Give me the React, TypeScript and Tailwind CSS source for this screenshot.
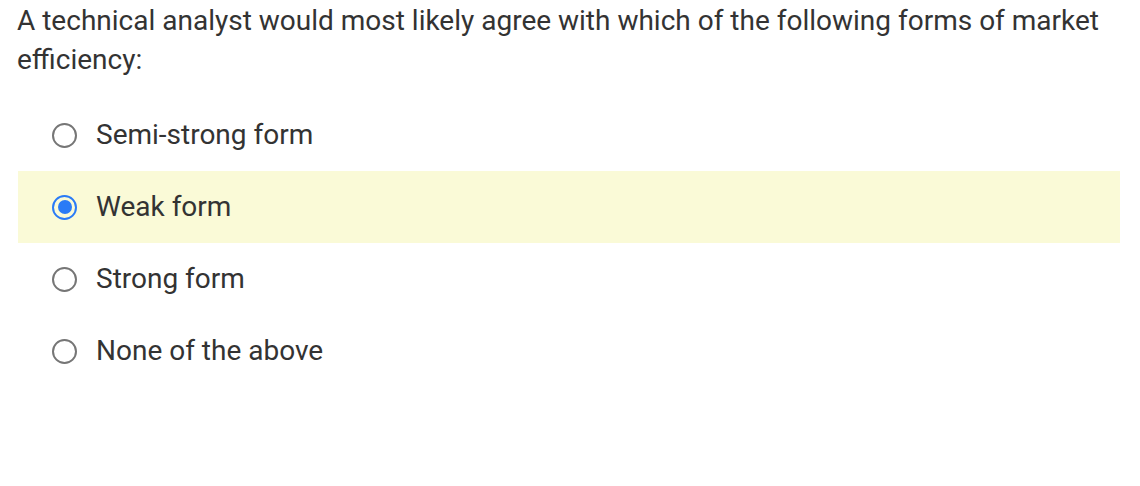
const OPTIONS = ["Semi-strong form", "Weak form", "Strong form", "None of the above"];

export default function App() {
  const selected = 1;
  return (
    <div className="w-[1140px] h-[486px] bg-white font-['Roboto',sans-serif] text-[#333333]">
      <p className="pl-[17px] pr-4 pt-[1px] text-[28px] leading-[39px]">
        A technical analyst would most likely agree with which of the following forms of market efficiency:
      </p>
      <div className="mt-[20px] pl-[18px] pr-[20px] flex flex-col">
        {OPTIONS.map((o, i) => {
          const on = i === selected;
          return (
            <label
              key={o}
              className={`flex items-center h-[72px] pl-[34px] ${on ? "bg-[#fafad7]" : ""}`}
            >
              {on ? (
                <span className="w-[25px] h-[25px] rounded-full border-[2.5px] border-[#2a7bf6] flex items-center justify-center">
                  <span className="w-[14px] h-[14px] rounded-full bg-[#2a7bf6]" />
                </span>
              ) : (
                <span className="w-[25px] h-[25px] rounded-full border-2 border-[#767676]" />
              )}
              <span className="ml-[19px] text-[28px]">{o}</span>
            </label>
          );
        })}
      </div>
    </div>
  );
}
